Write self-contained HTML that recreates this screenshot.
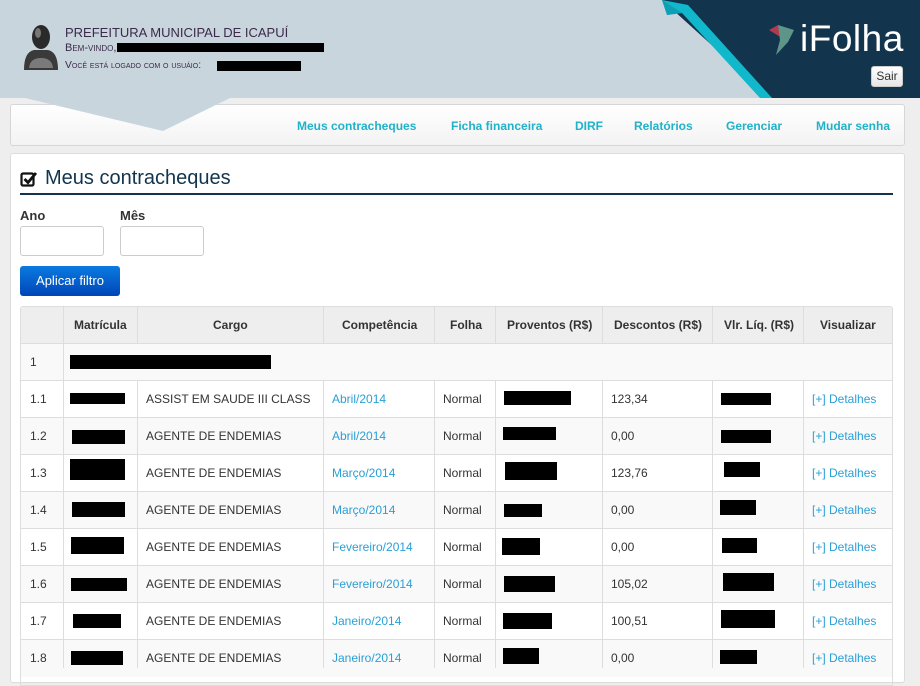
<!DOCTYPE html>
<html><head><meta charset="utf-8"><style>
*{margin:0;padding:0;box-sizing:border-box}
body{width:920px;height:668px;overflow:hidden;background:#eeeeee;font-family:"Liberation Sans",Arial,sans-serif;position:relative}
.a{position:absolute}
.blk{position:absolute;background:#000}
.hdr{left:0;top:0;width:920px;height:98px;background:#c9d5dd}
.nav{left:10px;top:104px;width:895px;height:42px;background:linear-gradient(#fff,#f3f3f3);border:1px solid #d6d6d6;border-radius:3px}
.nav a{position:absolute;top:14px;font-size:12px;font-weight:bold;color:#1fb2c9;text-decoration:none}
.panel{left:10px;top:153px;width:895px;height:530px;background:#fff;border:1px solid #dcdcdc;border-radius:3px}
.c{position:absolute;font-size:12px;color:#333;white-space:nowrap}
.th{font-weight:bold;color:#333}
.lnk{color:#2a9fd6}
.vl{position:absolute;width:1px;background:#dddddd}
.hl{position:absolute;height:1px;background:#dddddd;left:20px;width:873px}
</style></head><body>
<div class="a hdr"></div>
<svg class="a" style="left:0;top:0" width="920" height="140">
<polygon points="662,0 920,0 920,98 770,98" fill="#12344d"/>
<polygon points="662,0 688,5 772,98 760,98 682,13 667,15" fill="#11b7cb"/>
<polygon points="662,0 682,13 667,15" fill="#0e9fb5"/>
</svg>
<svg class="a" style="left:20px;top:24px" width="42" height="48" viewBox="0 0 42 48">
<ellipse cx="21" cy="13" rx="9" ry="12" fill="#2a2a2a"/>
<path d="M4 46 Q4 28 14 26 L28 26 Q38 28 38 46 Z" fill="#3a3a3a"/>
<path d="M9 44 Q10 34 21 34 Q32 34 33 44 Z" fill="#7a7a7a"/>
<ellipse cx="18" cy="9" rx="3" ry="5" fill="#777"/>
</svg>
<div class="c" style="left:65px;top:25px;font-size:13px;color:#3b2a4a">PREFEITURA MUNICIPAL DE ICAPUÍ</div>
<div class="c" style="left:65px;top:42px;font-size:11px;color:#3b2a4a;font-variant:small-caps">Bem-vindo,</div>
<div class="blk" style="left:117px;top:43px;width:207px;height:9px"></div>
<div class="c" style="left:65px;top:60px;font-size:10.3px;color:#3b2a4a;font-variant:small-caps">Você está logado com o usuáio:</div>
<div class="blk" style="left:217px;top:61px;width:84px;height:10px"></div>
<svg class="a" style="left:768px;top:22px" width="30" height="34" viewBox="0 0 30 34">
<polygon points="1,8 10,3 14,16" fill="#b33a4e"/>
<polygon points="10,3 26,8 20,20 8,33 12,18" fill="#5e9589"/>
</svg>
<div class="c" style="left:800px;top:18px;font-size:37px;color:#fff;letter-spacing:0.5px">iFolha</div>
<div class="a" style="left:871px;top:66px;width:32px;height:21px;background:linear-gradient(#fff,#e6e6e6);border:1px solid #ccc;border-radius:3px;font-size:12px;color:#333;text-align:center;line-height:19px">Sair</div>
<div class="a nav">
<a style="left:286px">Meus contracheques</a>
<a style="left:440px">Ficha financeira</a>
<a style="left:564px">DIRF</a>
<a style="left:623px">Relatórios</a>
<a style="left:715px">Gerenciar</a>
<a style="left:805px">Mudar senha</a>
</div>
<svg class="a" style="left:0;top:97px" width="240" height="36"><polygon points="25,1 230,1 163,34" fill="#c9d5dd"/></svg>
<div class="a panel"></div>
<svg class="a" style="left:20px;top:170px" width="18" height="17" viewBox="0 0 18 17">
<rect x="1.5" y="3.5" width="12" height="12" rx="1.5" fill="none" stroke="#111" stroke-width="2.2"/>
<path d="M4.5 9 L8 12.5 L16 3" fill="none" stroke="#111" stroke-width="2.8"/>
</svg>
<div class="c" style="left:45px;top:167px;font-size:20px;color:#12344d">Meus contracheques</div>
<div class="a" style="left:20px;top:193px;width:873px;height:2px;background:#12344d"></div>
<div class="c th" style="left:20px;top:208px;font-size:13px">Ano</div>
<div class="c th" style="left:120px;top:208px;font-size:13px">Mês</div>
<div class="a" style="left:20px;top:226px;width:84px;height:30px;border:1px solid #ccc;border-radius:3px"></div>
<div class="a" style="left:120px;top:226px;width:84px;height:30px;border:1px solid #ccc;border-radius:3px"></div>
<div class="a" style="left:20px;top:266px;width:100px;height:30px;background:linear-gradient(#0a7ae0,#0046b8);border-radius:3px;color:#fff;font-size:13px;text-align:center;line-height:30px">Aplicar filtro</div>
<div class="a" style="left:20px;top:306px;width:873px;height:380px;border:1px solid #ddd;border-radius:3px 3px 0 0;overflow:hidden">
<div class="a" style="left:0;top:0;width:873px;height:37px;background:#eeeeee"></div>
<div class="a" style="left:0;top:37px;width:873px;height:37px;background:#f9f9f9"></div>
<div class="a" style="left:0;top:111px;width:873px;height:37px;background:#f9f9f9"></div>
<div class="a" style="left:0;top:185px;width:873px;height:37px;background:#f9f9f9"></div>
<div class="a" style="left:0;top:259px;width:873px;height:37px;background:#f9f9f9"></div>
<div class="a" style="left:0;top:333px;width:873px;height:37px;background:#f9f9f9"></div>
</div>
<div class="hl" style="top:343px"></div><div class="hl" style="top:380px"></div><div class="hl" style="top:417px"></div><div class="hl" style="top:454px"></div><div class="hl" style="top:491px"></div><div class="hl" style="top:528px"></div><div class="hl" style="top:565px"></div><div class="hl" style="top:602px"></div><div class="hl" style="top:639px"></div>
<div class="vl" style="left:63px;top:306px;height:362px"></div>
<div class="vl" style="left:137px;top:306px;height:37px"></div><div class="vl" style="left:137px;top:380px;height:288px"></div>
<div class="vl" style="left:323px;top:306px;height:37px"></div><div class="vl" style="left:323px;top:380px;height:288px"></div>
<div class="vl" style="left:434px;top:306px;height:37px"></div><div class="vl" style="left:434px;top:380px;height:288px"></div>
<div class="vl" style="left:495px;top:306px;height:37px"></div><div class="vl" style="left:495px;top:380px;height:288px"></div>
<div class="vl" style="left:602px;top:306px;height:37px"></div><div class="vl" style="left:602px;top:380px;height:288px"></div>
<div class="vl" style="left:712px;top:306px;height:37px"></div><div class="vl" style="left:712px;top:380px;height:288px"></div>
<div class="vl" style="left:803px;top:306px;height:37px"></div><div class="vl" style="left:803px;top:380px;height:288px"></div>
<div class="c th" style="left:74px;top:318px">Matrícula</div>
<div class="c th" style="left:213px;top:318px">Cargo</div>
<div class="c th" style="left:342px;top:318px">Competência</div>
<div class="c th" style="left:450px;top:318px">Folha</div>
<div class="c th" style="left:507px;top:318px">Proventos (R$)</div>
<div class="c th" style="left:614px;top:318px">Descontos (R$)</div>
<div class="c th" style="left:724px;top:318px">Vlr. Líq. (R$)</div>
<div class="c th" style="left:820px;top:318px">Visualizar</div>
<div class="c" style="left:30px;top:355px">1</div>
<div class="blk" style="left:70px;top:355px;width:201px;height:14px"></div>

<div class="c" style="left:30px;top:392px">1.1</div><div class="c" style="left:146px;top:392px">ASSIST EM SAUDE III CLASS</div><div class="c lnk" style="left:332px;top:392px">Abril/2014</div><div class="c" style="left:443px;top:392px">Normal</div><div class="c" style="left:611px;top:392px">123,34</div><div class="c lnk" style="left:812px;top:392px">[+] Detalhes</div>
<div class="blk" style="left:70px;top:393px;width:55px;height:11px"></div><div class="blk" style="left:504px;top:391px;width:67px;height:14px"></div><div class="blk" style="left:721px;top:393px;width:50px;height:12px"></div>

<div class="c" style="left:30px;top:429px">1.2</div><div class="c" style="left:146px;top:429px">AGENTE DE ENDEMIAS</div><div class="c lnk" style="left:332px;top:429px">Abril/2014</div><div class="c" style="left:443px;top:429px">Normal</div><div class="c" style="left:611px;top:429px">0,00</div><div class="c lnk" style="left:812px;top:429px">[+] Detalhes</div>
<div class="blk" style="left:72px;top:430px;width:53px;height:14px"></div><div class="blk" style="left:503px;top:427px;width:53px;height:13px"></div><div class="blk" style="left:721px;top:430px;width:50px;height:13px"></div>

<div class="c" style="left:30px;top:466px">1.3</div><div class="c" style="left:146px;top:466px">AGENTE DE ENDEMIAS</div><div class="c lnk" style="left:332px;top:466px">Março/2014</div><div class="c" style="left:443px;top:466px">Normal</div><div class="c" style="left:611px;top:466px">123,76</div><div class="c lnk" style="left:812px;top:466px">[+] Detalhes</div>
<div class="blk" style="left:70px;top:459px;width:55px;height:21px"></div><div class="blk" style="left:505px;top:462px;width:52px;height:18px"></div><div class="blk" style="left:724px;top:462px;width:36px;height:15px"></div>

<div class="c" style="left:30px;top:503px">1.4</div><div class="c" style="left:146px;top:503px">AGENTE DE ENDEMIAS</div><div class="c lnk" style="left:332px;top:503px">Março/2014</div><div class="c" style="left:443px;top:503px">Normal</div><div class="c" style="left:611px;top:503px">0,00</div><div class="c lnk" style="left:812px;top:503px">[+] Detalhes</div>
<div class="blk" style="left:72px;top:502px;width:53px;height:15px"></div><div class="blk" style="left:504px;top:504px;width:38px;height:13px"></div><div class="blk" style="left:720px;top:500px;width:36px;height:15px"></div>

<div class="c" style="left:30px;top:540px">1.5</div><div class="c" style="left:146px;top:540px">AGENTE DE ENDEMIAS</div><div class="c lnk" style="left:332px;top:540px">Fevereiro/2014</div><div class="c" style="left:443px;top:540px">Normal</div><div class="c" style="left:611px;top:540px">0,00</div><div class="c lnk" style="left:812px;top:540px">[+] Detalhes</div>
<div class="blk" style="left:71px;top:537px;width:53px;height:17px"></div><div class="blk" style="left:502px;top:538px;width:38px;height:17px"></div><div class="blk" style="left:722px;top:538px;width:35px;height:15px"></div>

<div class="c" style="left:30px;top:577px">1.6</div><div class="c" style="left:146px;top:577px">AGENTE DE ENDEMIAS</div><div class="c lnk" style="left:332px;top:577px">Fevereiro/2014</div><div class="c" style="left:443px;top:577px">Normal</div><div class="c" style="left:611px;top:577px">105,02</div><div class="c lnk" style="left:812px;top:577px">[+] Detalhes</div>
<div class="blk" style="left:71px;top:578px;width:56px;height:13px"></div><div class="blk" style="left:504px;top:576px;width:51px;height:16px"></div><div class="blk" style="left:723px;top:573px;width:51px;height:18px"></div>

<div class="c" style="left:30px;top:614px">1.7</div><div class="c" style="left:146px;top:614px">AGENTE DE ENDEMIAS</div><div class="c lnk" style="left:332px;top:614px">Janeiro/2014</div><div class="c" style="left:443px;top:614px">Normal</div><div class="c" style="left:611px;top:614px">100,51</div><div class="c lnk" style="left:812px;top:614px">[+] Detalhes</div>
<div class="blk" style="left:73px;top:614px;width:48px;height:14px"></div><div class="blk" style="left:503px;top:613px;width:49px;height:16px"></div><div class="blk" style="left:721px;top:610px;width:54px;height:18px"></div>

<div class="c" style="left:30px;top:651px">1.8</div><div class="c" style="left:146px;top:651px">AGENTE DE ENDEMIAS</div><div class="c lnk" style="left:332px;top:651px">Janeiro/2014</div><div class="c" style="left:443px;top:651px">Normal</div><div class="c" style="left:611px;top:651px">0,00</div><div class="c lnk" style="left:812px;top:651px">[+] Detalhes</div>
<div class="blk" style="left:71px;top:651px;width:52px;height:14px"></div><div class="blk" style="left:503px;top:648px;width:36px;height:16px"></div><div class="blk" style="left:720px;top:650px;width:37px;height:14px"></div>
</body></html>
